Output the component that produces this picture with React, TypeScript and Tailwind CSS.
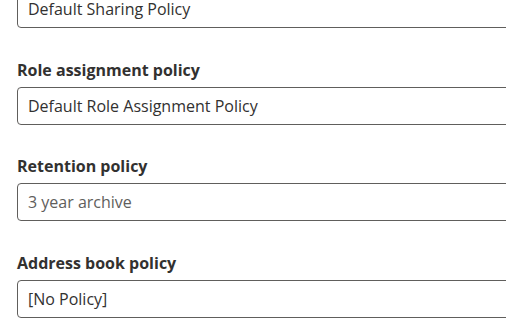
import React from "react";

const font = { fontFamily: '"Open Sans", "Noto Sans", sans-serif' };

function Box({ value, muted }: { value: string; muted?: boolean }) {
  return (
    <div
      className={`flex h-[38px] w-[600px] items-center rounded-[4px] border border-[#605e5c] bg-white px-[10px] text-[16px] ${
        muted ? "text-[#605e5c]" : "text-[#323130]"
      }`}
    >
      {value}
    </div>
  );
}

function Field({ label, value, muted }: { label: string; value: string; muted?: boolean }) {
  return (
    <div className="mt-[29.5px] flex flex-col">
      <div className="mb-[5px] h-[24px] text-[16px] font-bold leading-[24px] text-[#323130]">{label}</div>
      <Box value={value} muted={muted} />
    </div>
  );
}

export default function App() {
  return (
    <div className="h-[326px] w-[506px] overflow-hidden bg-white" style={font}>
      <div className="flex flex-col pl-[17px]">
        <div className="-mt-[10px]">
          <Box value="Default Sharing Policy" />
        </div>
        <Field label="Role assignment policy" value="Default Role Assignment Policy" />
        <Field label="Retention policy" value="3 year archive" muted />
        <Field label="Address book policy" value="[No Policy]" />
      </div>
    </div>
  );
}
